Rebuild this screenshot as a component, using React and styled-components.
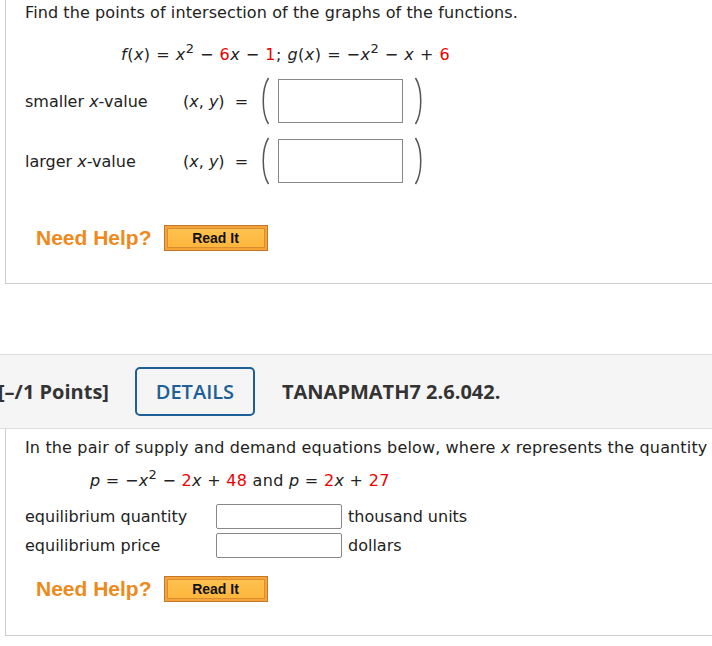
import React from "react";
import styled, { createGlobalStyle } from "styled-components";

const Global = createGlobalStyle`
  html, body { margin: 0; padding: 0; background: #fff; overflow: hidden; }
  body { font-family: "DejaVu Sans", Verdana, sans-serif; color: #222; }
`;

const Page = styled.div`
  width: 712px;
  height: 646px;
  overflow: hidden;
`;

const Panel = styled.div`
  margin-left: 5px;
  width: 900px;
  border: 1px solid #ccc;
  border-top: none;
  padding: ${(p) => p.$pad};
  box-sizing: border-box;
  height: ${(p) => p.$h}px;
`;

const Prompt = styled.div`
  font-size: 16px;
  line-height: 22px;
  letter-spacing: ${(p) => p.$ls || 0}px;
  color: #222;
  white-space: nowrap;
`;

const Formula = styled.div`
  font-size: 16px;
  line-height: 22px;
  padding-left: ${(p) => p.$indent}px;
  margin-top: ${(p) => p.$mt}px;
  white-space: nowrap;
  letter-spacing: ${(p) => p.$ls}px;
`;

const Red = styled.span`
  color: #e00;
`;

const I = styled.i`
  font-style: italic;
`;

const Sup = styled.sup`
  font-size: 13px;
  vertical-align: 7px;
  line-height: 0;
`;

const AnswerRow = styled.div`
  display: flex;
  align-items: center;
  height: 48px;
  margin-top: ${(p) => p.$mt}px;
  font-size: 16px;
`;

const RowLabel = styled.div`
  width: 158px;
  white-space: nowrap;
`;

const Pair = styled.div`
  width: 77px;
  white-space: nowrap;
`;

const Paren = styled.svg`
  width: 10px;
  height: 48px;
  display: block;
`;

const PairBox = styled.div`
  width: 123px;
  height: 42px;
  border: 1px solid #888;
  margin: 0 11px 0 8px;
`;

const HelpRow = styled.div`
  display: flex;
  align-items: center;
  margin-top: ${(p) => p.$mt}px;
  padding-left: 11px;
`;

const NeedHelp = styled.span`
  font-family: "Liberation Sans", Arial, sans-serif;
  font-weight: bold;
  font-size: 21px;
  color: #ee8a1c;
  margin-right: 12px;
`;

const ReadIt = styled.div`
  border: 1px solid #c17828;
  background: #f6a33a;
  display: flex;
  padding: 2px;
  box-sizing: content-box;
  width: 98px;
  height: 20px;
`;

const ReadItInner = styled.div`
  flex: 1;
  border: 1px solid #d98e30;
  background: linear-gradient(#ffc24f, #fdb63d);
  font-family: "Liberation Sans", Arial, sans-serif;
  font-weight: bold;
  font-size: 14px;
  color: #111;
  display: flex;
  align-items: center;
  justify-content: center;
`;

const Header = styled.div`
  margin-top: 70px;
  height: 73px;
  border-top: 1px solid #ddd;
  border-bottom: 1px solid #ddd;
  background: #f5f5f5;
  display: flex;
  align-items: center;
  font-family: "Open Sans", sans-serif;
  font-size: 20px;
  color: #333;
`;

const Points = styled.span`
  font-weight: 700;
  margin-left: -2px;
  margin-right: 26px;
`;

const Details = styled.div`
  width: 116px;
  height: 45px;
  border: 2px solid #1d5f96;
  border-radius: 5px;
  display: flex;
  align-items: center;
  justify-content: center;
  color: #1d5f96;
  font-weight: 600;
  margin-right: 27px;
`;

const Code = styled.span`
  font-weight: 700;
`;

const EqRow = styled.div`
  display: flex;
  align-items: center;
  font-size: 16px;
  height: 29px;
  margin-top: ${(p) => p.$mt || 0}px;
`;

const EqLabel = styled.div`
  width: 191px;
  white-space: nowrap;
`;

const EqBox = styled.div`
  width: 124px;
  height: 23px;
  border: 1px solid #888;
  border-radius: 2px;
  margin-right: 6px;
`;

const LeftParen = () => (
  <Paren viewBox="0 0 10 48">
    <path d="M8.5 1 C1.5 12 1.5 36 8.5 47" fill="none" stroke="#555" strokeWidth="1.5" />
  </Paren>
);
const RightParen = () => (
  <Paren viewBox="0 0 10 48">
    <path d="M1.5 1 C8.5 12 8.5 36 1.5 47" fill="none" stroke="#555" strokeWidth="1.5" />
  </Paren>
);

const Answer = ({ label, mt }) => (
  <AnswerRow $mt={mt}>
    <RowLabel>{label} <I>x</I>-value</RowLabel>
    <Pair>(<I>x</I>, <I>y</I>) &nbsp;=</Pair>
    <LeftParen />
    <PairBox />
    <RightParen />
  </AnswerRow>
);

const Help = ({ mt }) => (
  <HelpRow $mt={mt}>
    <NeedHelp>Need Help?</NeedHelp>
    <ReadIt>
      <ReadItInner>Read It</ReadItInner>
    </ReadIt>
  </HelpRow>
);

export default function App() {
  return (
    <Page>
      <Global />
      <Panel $pad="2px 0 0 19px" $h={284}>
        <Prompt $ls={0.1}>Find the points of intersection of the graphs of the functions.</Prompt>
        <Formula $indent={96} $mt={20} $ls={0.5}>
          <I>f</I>(<I>x</I>) = <I>x</I><Sup>2</Sup> − <Red>6</Red><I>x</I> − <Red>1</Red>; <I>g</I>(<I>x</I>) = −<I>x</I><Sup>2</Sup> − <I>x</I> + <Red>6</Red>
        </Formula>
        <Answer label="smaller" mt={11} />
        <Answer label="larger" mt={12} />
        <Help mt={40} />
      </Panel>
      <Header>
        <Points>[–/1 Points]</Points>
        <Details>DETAILS</Details>
        <Code>TANAPMATH7 2.6.042.</Code>
      </Header>
      <Panel $pad="8px 0 0 19px" $h={207}>
        <Prompt $ls={0.15}>In the pair of supply and demand equations below, where <I>x</I> represents the quantity demanded in units of a thousand</Prompt>
        <Formula $indent={65} $mt={11} $ls={0.3}>
          <I>p</I> = −<I>x</I><Sup>2</Sup> − <Red>2</Red><I>x</I> + <Red>48</Red> and <I>p</I> = <Red>2</Red><I>x</I> + <Red>27</Red>
        </Formula>
        <EqRow $mt={10}>
          <EqLabel>equilibrium quantity</EqLabel>
          <EqBox />
          thousand units
        </EqRow>
        <EqRow>
          <EqLabel>equilibrium price</EqLabel>
          <EqBox />
          dollars
        </EqRow>
        <Help mt={16} />
      </Panel>
    </Page>
  );
}
